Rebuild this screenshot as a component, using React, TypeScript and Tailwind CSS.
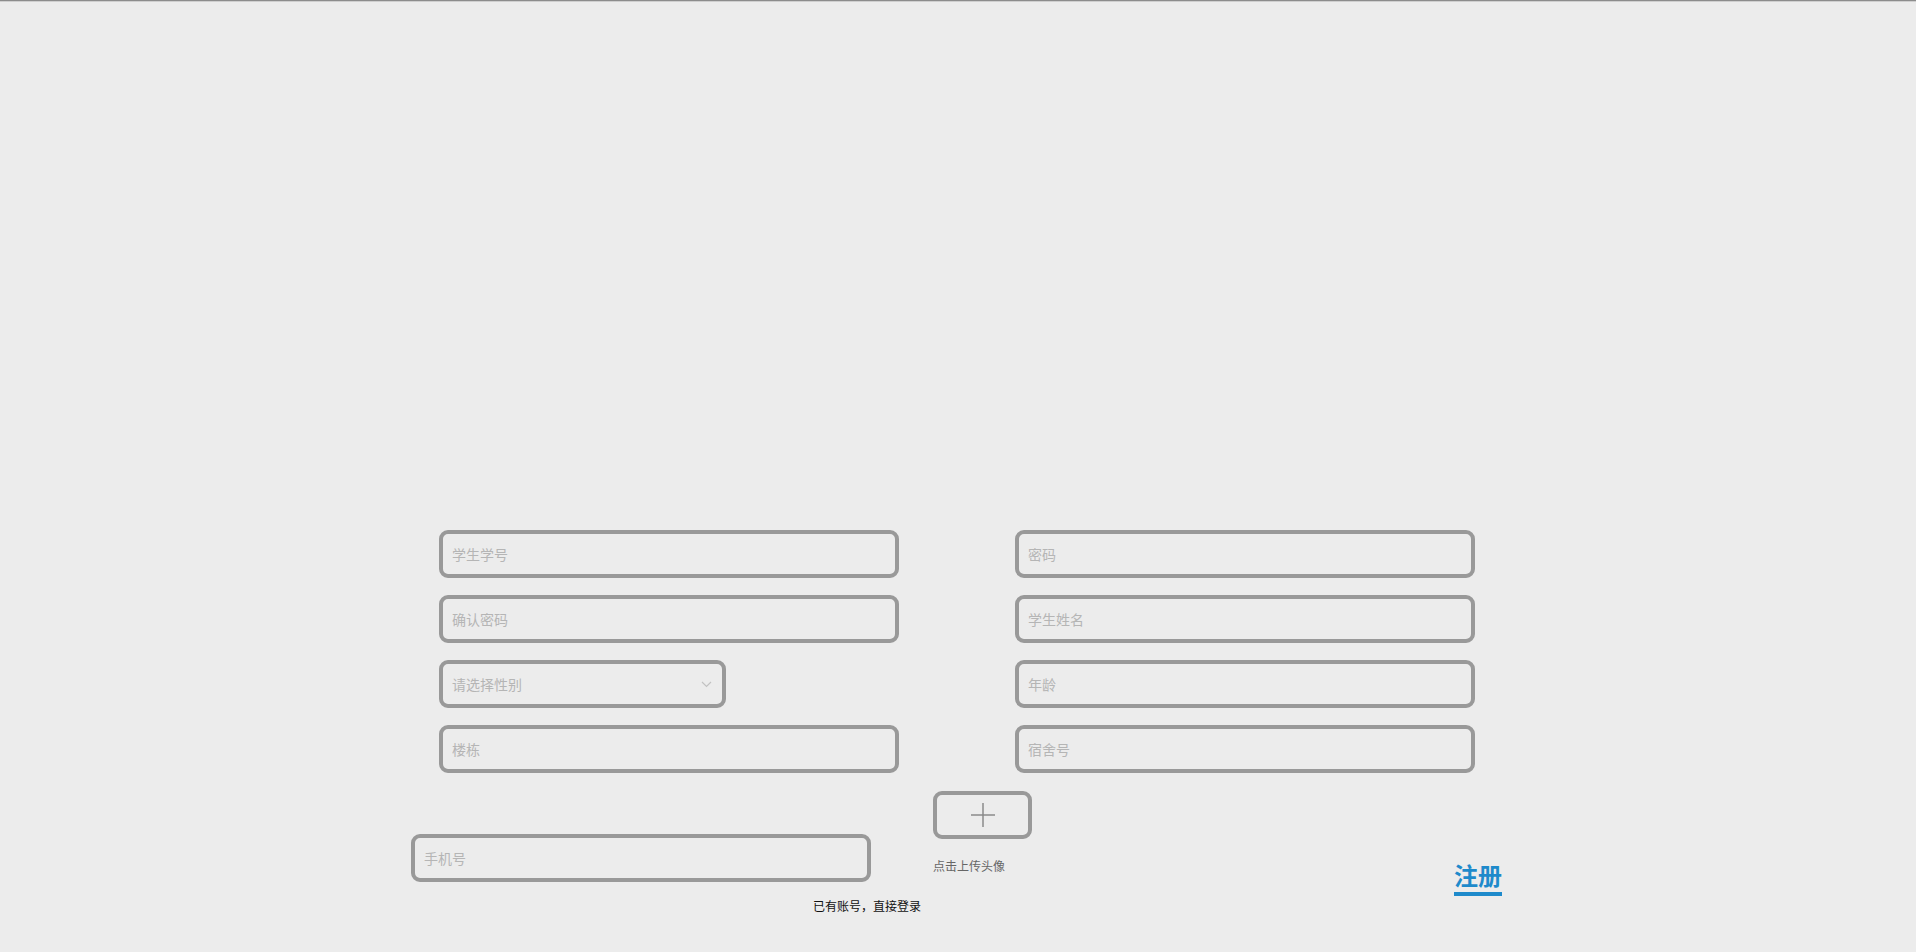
import React from "react";

const font = { fontFamily: '"Microsoft YaHei", "Noto Sans CJK SC", "Liberation Sans", sans-serif' };

function Field({ placeholder, type = "text" }: { placeholder: string; type?: string }) {
  return (
    <input
      type={type}
      placeholder={placeholder}
      className="h-[48px] w-[460px] rounded-[9px] border-4 border-[#999999] bg-transparent px-[9px] text-[14px] text-[#333] outline-none placeholder:text-[#b5b5b5]"
    />
  );
}

export default function App() {
  return (
    <div className="min-h-[952px] w-full bg-[#ececec]" style={font}>
      <div className="h-[1px] w-full bg-[#8c8c8c]" />
      <div className="h-[1px] w-full bg-[#cfcfcf]" />
      <div className="ml-[439px] w-[1036px] pt-[528px]">
        <div className="grid grid-cols-[460px_460px] justify-between gap-y-[17px]">
          <Field placeholder="学生学号" />
          <Field placeholder="密码" type="password" />
          <Field placeholder="确认密码" type="password" />
          <Field placeholder="学生姓名" />
          <div className="flex h-[48px] w-[287px] items-center justify-between rounded-[9px] border-4 border-[#999999] pl-[9px] pr-[10px] text-[14px] text-[#b5b5b5]">
            <span>请选择性别</span>
            <svg width="11" height="7" viewBox="0 0 11 7" fill="none">
              <path d="M1 1l4.5 4.5L10 1" stroke="#c2c2c2" strokeWidth="1.2" />
            </svg>
          </div>
          <Field placeholder="年龄" />
          <Field placeholder="楼栋" />
          <Field placeholder="宿舍号" />
        </div>

        <div className="ml-[-28px] mt-[18px] flex items-start">
          <div className="flex w-[460px] flex-col pt-[43px]">
            <Field placeholder="手机号" />
            <span className="ml-[402px] mt-[16px] whitespace-nowrap text-[12px] leading-[16px] text-[#111]">
              已有账号，直接登录
            </span>
          </div>
          <div className="ml-[62px] flex flex-col">
            <div className="flex h-[48px] w-[99px] items-center justify-center rounded-[9px] border-4 border-[#999999]">
              <svg width="26" height="26" viewBox="0 0 26 26">
                <path d="M13 1v24M1 13h24" stroke="#8a8a8a" strokeWidth="1.5" />
              </svg>
            </div>
            <span className="mt-[20px] text-[12px] leading-[14px] text-[#666]">点击上传头像</span>
          </div>
          <div className="ml-[422px] mt-[71px] flex flex-col">
            <span className="text-[24px] font-bold leading-[26px] text-[#1e8acb]">注册</span>
            <div className="mt-[4px] h-[4px] w-[48px] bg-[#1e8acb]" />
          </div>
        </div>
      </div>
    </div>
  );
}
